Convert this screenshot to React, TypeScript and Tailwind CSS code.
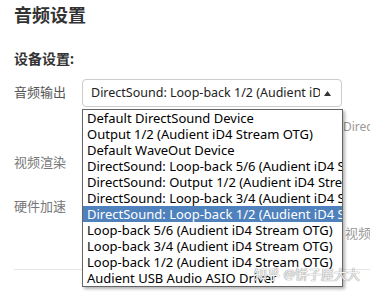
import React from "react";

const options = [
  "Default DirectSound Device",
  "Output 1/2 (Audient iD4 Stream OTG)",
  "Default WaveOut Device",
  "DirectSound: Loop-back 5/6 (Audient iD4 Stream OTG)",
  "DirectSound: Output 1/2 (Audient iD4 Stream OTG)",
  "DirectSound: Loop-back 3/4 (Audient iD4 Stream OTG)",
  "DirectSound: Loop-back 1/2 (Audient iD4 Stream OTG)",
  "Loop-back 5/6 (Audient iD4 Stream OTG)",
  "Loop-back 3/4 (Audient iD4 Stream OTG)",
  "Loop-back 1/2 (Audient iD4 Stream OTG)",
  "Audient USB Audio ASIO Driver",
];

const selectedIndex = 6;

const App: React.FC = () => {
  return (
    <div className="relative w-[370px] h-[294px] overflow-hidden bg-white font-['Noto_Sans','Noto_Sans_CJK_SC',sans-serif]">
      <div className="pl-[14px] pt-[5px]">
        <h1 className="text-[18px] leading-[21px] font-bold text-[#333]">音频设置</h1>
        <div className="mt-[23px] text-[14px] leading-[20px] font-bold text-[#333]">设备设置:</div>

        {/* 音频输出 */}
        <div className="mt-[10px] flex items-center h-[28px]">
          <span className="w-[68px] text-[13px] text-[#555]">音频输出</span>
          <div className="w-[260px] h-[28px] flex items-center border border-[#ccc] rounded-[4px] pl-[8px] pr-[10px] gap-[4px]">
            <span className="flex-1 overflow-hidden whitespace-nowrap text-[12.5px] text-[#222]">
              DirectSound: Loop-back 1/2 (Audient iD4 Stream OTG)
            </span>
            <svg width="7" height="5" viewBox="0 0 7 5">
              <path d="M0 5 L3.5 0 L7 5 Z" fill="#333" />
            </svg>
          </div>
        </div>

        <div className="mt-[10px] h-[20px] pl-[329px] overflow-hidden whitespace-nowrap text-[12px] leading-[20px] text-[#999]">
          DirectSound: Loop-back 1/2
        </div>

        <div className="mt-[16px] h-[20px] flex items-center text-[13px] text-[#777]">视频渲染</div>
        <div className="mt-[24px] h-[20px] flex items-center text-[13px] text-[#777]">硬件加速</div>

        <div className="mt-[6px] h-[20px] pl-[331px] overflow-hidden whitespace-nowrap text-[13px] leading-[20px] text-[#999]">
          视频渲染方式
        </div>

        <div className="mt-[26px] h-px bg-[#e6e6e6]" />
      </div>

      {/* open dropdown list */}
      <ul className="absolute left-[82px] top-[109px] w-[261px] border border-[#666] bg-white shadow-[2px_2px_3px_rgba(0,0,0,0.3)]">
        {options.map((opt, i) => (
          <li
            key={opt}
            className={
              i === selectedIndex
                ? "h-[16px] pl-[4px] overflow-hidden whitespace-nowrap text-[13px] leading-[16px] bg-[#4f81bd] text-white"
                : "h-[16px] pl-[4px] overflow-hidden whitespace-nowrap text-[13px] leading-[16px] text-black"
            }
          >
            {opt}
          </li>
        ))}
      </ul>

      {/* watermark */}
      <div className="absolute left-[254px] top-[264px] text-[13px] leading-[20px] text-white/90 [text-shadow:0_0_1px_#888,0_0_1px_#888]">
        知乎 @饼子屋大大
      </div>
    </div>
  );
};

export default App;
